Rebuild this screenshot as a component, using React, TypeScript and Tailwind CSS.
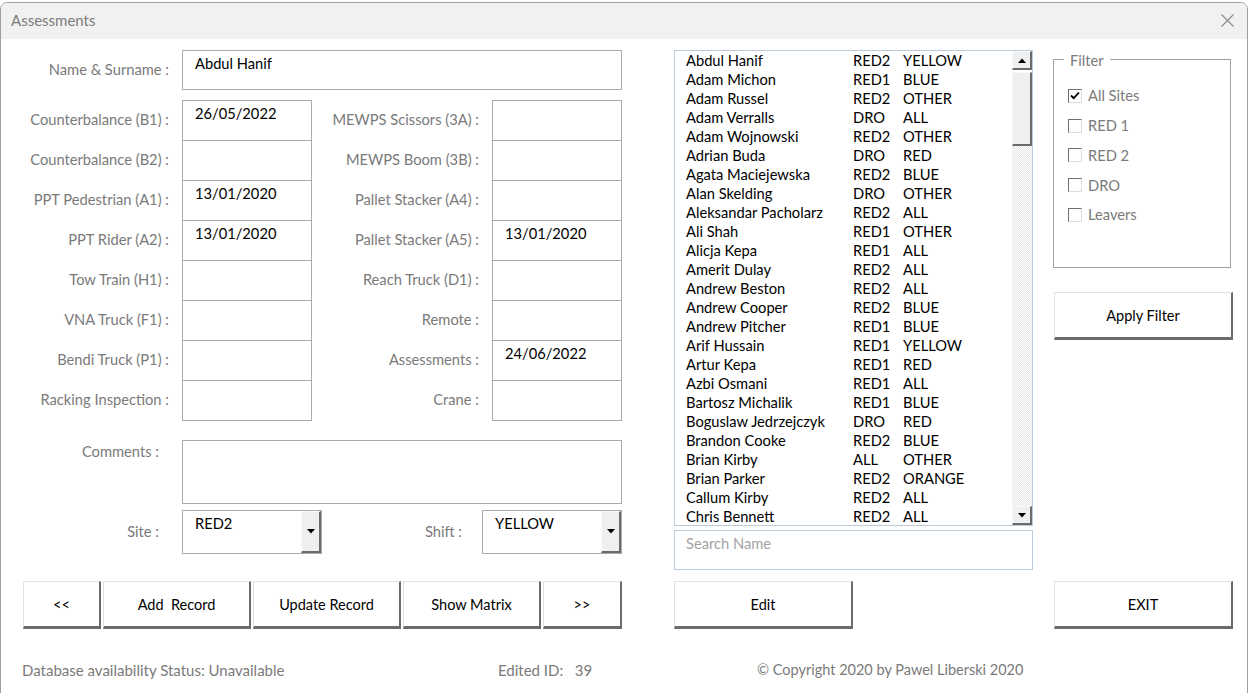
import type { ReactNode } from 'react';

const people: [string, string, string][] = [
  ['Abdul Hanif', 'RED2', 'YELLOW'],
  ['Adam Michon', 'RED1', 'BLUE'],
  ['Adam Russel', 'RED2', 'OTHER'],
  ['Adam Verralls', 'DRO', 'ALL'],
  ['Adam Wojnowski', 'RED2', 'OTHER'],
  ['Adrian Buda', 'DRO', 'RED'],
  ['Agata Maciejewska', 'RED2', 'BLUE'],
  ['Alan Skelding', 'DRO', 'OTHER'],
  ['Aleksandar Pacholarz', 'RED2', 'ALL'],
  ['Ali Shah', 'RED1', 'OTHER'],
  ['Alicja Kepa', 'RED1', 'ALL'],
  ['Amerit Dulay', 'RED2', 'ALL'],
  ['Andrew Beston', 'RED2', 'ALL'],
  ['Andrew Cooper', 'RED2', 'BLUE'],
  ['Andrew Pitcher', 'RED1', 'BLUE'],
  ['Arif Hussain', 'RED1', 'YELLOW'],
  ['Artur Kepa', 'RED1', 'RED'],
  ['Azbi Osmani', 'RED1', 'ALL'],
  ['Bartosz Michalik', 'RED1', 'BLUE'],
  ['Boguslaw Jedrzejczyk', 'DRO', 'RED'],
  ['Brandon Cooke', 'RED2', 'BLUE'],
  ['Brian Kirby', 'ALL', 'OTHER'],
  ['Brian Parker', 'RED2', 'ORANGE'],
  ['Callum Kirby', 'RED2', 'ALL'],
  ['Chris Bennett', 'RED2', 'ALL'],
];

// left/middle column pairs of the qualification grid
const fields: [string, string, string, string][] = [
  ['Counterbalance (B1) :', '26/05/2022', 'MEWPS Scissors (3A) :', ''],
  ['Counterbalance (B2) :', '', 'MEWPS Boom (3B) :', ''],
  ['PPT Pedestrian (A1) :', '13/01/2020', 'Pallet Stacker (A4) :', ''],
  ['PPT Rider (A2) :', '13/01/2020', 'Pallet Stacker (A5) :', '13/01/2020'],
  ['Tow Train (H1) :', '', 'Reach Truck (D1) :', ''],
  ['VNA Truck (F1) :', '', 'Remote :', ''],
  ['Bendi Truck (P1) :', '', 'Assessments :', '24/06/2022'],
  ['Racking Inspection :', '', 'Crane :', ''],
];

const filters = [
  { label: 'All Sites', checked: true },
  { label: 'RED 1', checked: false },
  { label: 'RED 2', checked: false },
  { label: 'DRO', checked: false },
  { label: 'Leavers', checked: false },
];

function Btn({ children, className }: { children: ReactNode; className: string }) {
  return (
    <div
      className={`flex h-[48px] items-center justify-center border-t border-l border-t-[#e1e1e1] border-l-[#e1e1e1] border-r-2 border-b-[3px] border-r-[#6b6b6b] border-b-[#6b6b6b] bg-white pt-[2px] text-[14.5px] text-black ${className}`}
    >
      {children}
    </div>
  );
}

function Arrow({ up }: { up?: boolean }) {
  return (
    <svg width="8" height="5" viewBox="0 0 8 5">
      <path d={up ? 'M0 5 L4 0.5 L8 5 Z' : 'M0 0 L8 0 L4 4.5 Z'} fill="#000" />
    </svg>
  );
}

function DropBtn() {
  return (
    <div className="flex h-full w-[20px] items-center justify-center border-t border-l border-t-[#fafafa] border-l-[#fafafa] border-r-2 border-b-2 border-r-[#6b6b6b] border-b-[#6b6b6b] bg-[#efefef]">
      <Arrow />
    </div>
  );
}

function Combo({ value, className }: { value: string; className: string }) {
  return (
    <div className={`flex h-[44px] border border-[#ababab] bg-white ${className}`}>
      <div className="flex-1 pl-[12px] pt-[1px] text-black">{value}</div>
      <DropBtn />
    </div>
  );
}

export default function App() {
  return (
    <div className="h-[693px] w-[1249px] overflow-hidden bg-white font-['Lato',sans-serif] text-[14.7px]">
      <div className="mt-[2px] flex h-[700px] w-[1248px] flex-col rounded-t-[7px] border border-[#9f9f9f]">
        <div className="flex h-[36px] items-center justify-between rounded-t-[7px] bg-[#f1f1f1] pb-[1px] pl-[10px] pr-[13px]">
          <span className="text-[15px] text-[#7c7c7c]">Assessments</span>
          <svg width="13" height="13" viewBox="0 0 13 13">
            <path d="M0.5 0.5 L12.5 12.5 M12.5 0.5 L0.5 12.5" stroke="#8a8a8a" strokeWidth="1.1" />
          </svg>
        </div>

        <div className="flex h-[531px]">
          {/* form */}
          <div className="w-[673px] pt-[11px]">
            <div className="flex h-[40px] items-center">
              <div className="w-[170px] pb-[1px] pr-[2px] text-right text-[#7a7a7a]">Name &amp; Surname :</div>
              <div className="ml-[11px] h-[40px] w-[440px] border border-[#ababab] pl-[12px] pt-[1px] text-black">Abdul Hanif</div>
            </div>

            <div className="mt-[10px]">
              {fields.map(([l1, v1, l2, v2]) => (
                <div key={l1} className="flex h-[40px] items-start">
                  <div className="flex h-[40px] w-[170px] items-center justify-end pb-[1px] pr-[2px] text-[#7a7a7a]">{l1}</div>
                  <div className="ml-[11px] h-[41px] w-[130px] border border-[#ababab] pl-[12px] pt-[1px] text-black">{v1}</div>
                  <div className="flex h-[40px] w-[169px] items-center justify-end pb-[1px] pr-[2px] text-[#7a7a7a]">{l2}</div>
                  <div className="ml-[11px] h-[41px] w-[130px] border border-[#ababab] pl-[12px] pt-[1px] text-black">{v2}</div>
                </div>
              ))}
            </div>

            <div className="mt-[20px] flex">
              <div className="w-[170px] pr-[12px] text-right text-[#7a7a7a]">Comments :</div>
              <div className="ml-[11px] h-[64px] w-[440px] border border-[#ababab]" />
            </div>

            <div className="mt-[6px] flex items-center">
              <div className="w-[170px] pb-[1px] pr-[12px] text-right text-[#7a7a7a]">Site :</div>
              <Combo value="RED2" className="ml-[11px] w-[140px]" />
              <div className="w-[160px] pb-[1px] pr-[20px] text-right text-[#7a7a7a]">Shift :</div>
              <Combo value="YELLOW" className="w-[140px]" />
            </div>
          </div>

          {/* name list */}
          <div className="w-[359px] pt-[11px]">
            <div className="flex h-[476px] border border-[#bccbdc]">
              <div className="flex-1 overflow-hidden">
                {people.map(([name, site, shift]) => (
                  <div key={name} className="flex h-[19px] items-center pl-[11px] leading-[19px] text-black">
                    <span className="w-[167px]">{name}</span>
                    <span className="w-[50px]">{site}</span>
                    <span>{shift}</span>
                  </div>
                ))}
              </div>
              <div className="flex w-[20px] flex-col">
                <div className="flex h-[19px] items-center justify-center border-t border-l border-t-[#fafafa] border-l-[#fafafa] border-r-2 border-b-2 border-r-[#6b6b6b] border-b-[#6b6b6b] bg-[#efefef]">
                  <Arrow up />
                </div>
                <div className="mt-[2px] h-[74px] border-t border-l border-t-[#fafafa] border-l-[#fafafa] border-r-2 border-b-2 border-r-[#6b6b6b] border-b-[#6b6b6b] bg-[#efefef]" />
                <div className="flex-1 bg-[repeating-conic-gradient(#e4e4e4_0%_25%,#ffffff_0%_50%)] bg-[length:2px_2px]" />
                <div className="flex h-[19px] items-center justify-center border-t border-l border-t-[#fafafa] border-l-[#fafafa] border-r-2 border-b-2 border-r-[#6b6b6b] border-b-[#6b6b6b] bg-[#efefef]">
                  <Arrow />
                </div>
              </div>
            </div>
            <div className="mt-[4px] h-[40px] border border-[#bccbdc] pl-[11px] pt-[1px] text-[#a3a3a3]">Search Name</div>
          </div>

          {/* filter */}
          <div className="ml-[20px] pt-[20px]">
            <div className="relative h-[209px] w-[178px] border border-[#a0a0a0] pl-[14px] pt-[21px]">
              <span className="absolute -top-[11px] left-[10px] bg-white px-[6px] text-[#7a7a7a]">Filter</span>
              {filters.map((f) => (
                <div key={f.label} className="flex h-[29.75px] items-center gap-[6px] text-[#7a7a7a]">
                  <div className="flex h-[14px] w-[14px] items-center justify-center border border-t-[#6f6f6f] border-l-[#6f6f6f] border-r-[#dcdcdc] border-b-[#dcdcdc] bg-white">
                    {f.checked && (
                      <svg width="10" height="9" viewBox="0 0 10 9">
                        <path d="M1 4.5 L3.7 7.2 L9 1.5" stroke="#000" strokeWidth="1.8" fill="none" />
                      </svg>
                    )}
                  </div>
                  <span className="pb-[1px]">{f.label}</span>
                </div>
              ))}
            </div>
            <Btn className="ml-[1px] mt-[24px] w-[179px]">Apply Filter</Btn>
          </div>
        </div>

        <div className="mt-[11px] flex">
          <div className="ml-[22px] flex gap-[2px]">
            <Btn className="w-[78px]">&lt;&lt;</Btn>
            <Btn className="w-[148px]">Add&nbsp; Record</Btn>
            <Btn className="w-[148px]">Update Record</Btn>
            <Btn className="w-[138px]">Show Matrix</Btn>
            <Btn className="w-[79px]">&gt;&gt;</Btn>
          </div>
          <Btn className="ml-[52px] w-[179px]">Edit</Btn>
          <Btn className="ml-[201px] w-[179px]">EXIT</Btn>
        </div>

        <div className="mt-[30px] flex pl-[21px] text-[15px] text-[#7a7a7a]">
          <span className="w-[476px]">Database availability Status: Unavailable</span>
          <span className="w-[259px]">Edited ID:&nbsp;&nbsp; 39</span>
          <span className="text-[14.5px]">© Copyright 2020 by Pawel Liberski 2020</span>
        </div>
      </div>
    </div>
  );
}
